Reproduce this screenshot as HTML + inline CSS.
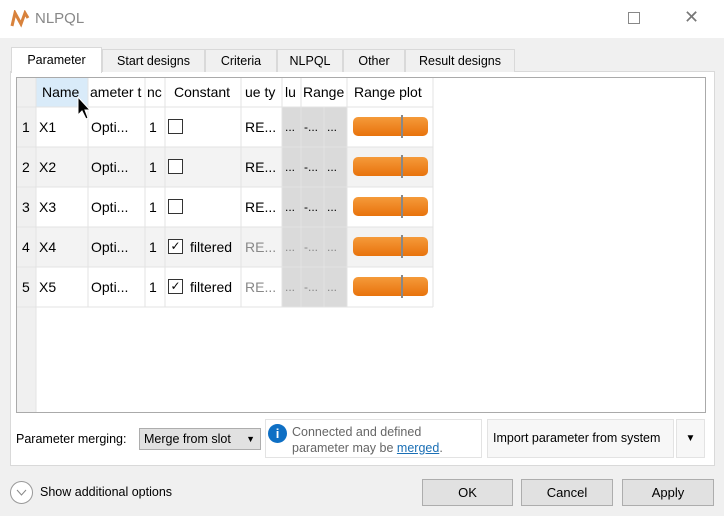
<!DOCTYPE html><html><head><style>
*{margin:0;padding:0;box-sizing:border-box}
body{width:724px;height:516px;background:#f0f0f0;font-family:"Liberation Sans",sans-serif;font-size:13px;color:#000;position:relative;overflow:hidden}
.a{position:absolute}
.tab{position:absolute;top:49px;height:23px;border:1px solid #d9d9d9;border-bottom:none;background:#f0f0f0;text-align:center;line-height:22px;font-size:12.5px}
.c{position:absolute;white-space:nowrap;overflow:hidden;line-height:40px;font-size:14px}
.cb{position:absolute;width:15px;height:15px;border:1px solid #333;background:#fff}
.bar{position:absolute;left:353px;width:75px;height:19px;border-radius:5px;background:linear-gradient(#f59a3a,#e8730c);}
.bar:after{content:"";position:absolute;left:48px;top:-2px;width:2px;height:23px;background:#888}
.btn{position:absolute;top:479px;height:27px;border:1px solid #adadad;background:#e1e1e1;text-align:center;line-height:25px;font-size:13px}
</style></head><body>
<div class="a" style="left:0;top:0;width:724px;height:38px;background:#fff"></div>
<svg class="a" style="left:10px;top:10px" width="20" height="18"><path d="M2 16 L5 3 L11 14 L15 3 L18 8" stroke="#d8823c" stroke-width="3" fill="none"/></svg>
<div class="a" style="left:35px;top:10px;font-size:15px;color:#888">NLPQL</div>
<div class="a" style="left:628px;top:12px;width:12px;height:12px;border:1px solid #888"></div>
<div class="a" style="left:684px;top:7px;font-size:18px;color:#777">✕</div>
<div class="a" style="left:10px;top:71px;width:705px;height:395px;background:#fff;border:1px solid #d9d9d9"></div>
<div class="tab" style="left:11px;top:47px;width:91px;height:26px;background:#fff;line-height:24px">Parameter</div>
<div class="tab" style="left:102px;width:103px">Start designs</div>
<div class="tab" style="left:205px;width:72px">Criteria</div>
<div class="tab" style="left:277px;width:66px">NLPQL</div>
<div class="tab" style="left:343px;width:62px">Other</div>
<div class="tab" style="left:405px;width:110px">Result designs</div>
<div class="a" style="left:16px;top:77px;width:690px;height:336px;border:1px solid #aaa;background:#fff"></div>
<div class="a" style="left:17px;top:78px;width:19px;height:334px;background:#f0f0f0"></div>
<div class="a" style="left:36px;top:78px;width:52px;height:29px;background:#d9ebf9"></div>
<div class="a" style="left:282px;top:107px;width:65px;height:200px;background:#dadada"></div>
<div class="a" style="left:36px;top:147px;width:246px;height:40px;background:#f3f3f3"></div>
<div class="a" style="left:36px;top:227px;width:246px;height:40px;background:#f3f3f3"></div>
<div class="a" style="left:347px;top:147px;width:86px;height:40px;background:#f3f3f3"></div>
<div class="a" style="left:347px;top:227px;width:86px;height:40px;background:#f3f3f3"></div>
<svg class="a" style="left:0;top:0" width="724" height="516">
<g stroke="#e3e3e3" stroke-width="1">
<line x1="36" y1="78" x2="36" y2="412"/>
<line x1="88" y1="78" x2="88" y2="307"/><line x1="145" y1="78" x2="145" y2="307"/><line x1="165" y1="78" x2="165" y2="307"/><line x1="241" y1="78" x2="241" y2="307"/><line x1="282" y1="78" x2="282" y2="307"/><line x1="301" y1="78" x2="301" y2="307"/><line x1="324" y1="107" x2="324" y2="307"/><line x1="347" y1="78" x2="347" y2="307"/><line x1="433" y1="78" x2="433" y2="307"/>
<line x1="17" y1="107" x2="433" y2="107"/><line x1="17" y1="147" x2="433" y2="147"/><line x1="17" y1="187" x2="433" y2="187"/><line x1="17" y1="227" x2="433" y2="227"/><line x1="17" y1="267" x2="433" y2="267"/><line x1="17" y1="307" x2="433" y2="307"/>
</g>
<path d="M78 97 L78 115 L82 111 L86 119 L88 118 L85 110 L90 110 Z" fill="#000" stroke="#fff" stroke-width="1"/>
</svg>
<div class="c" style="left:42px;top:72px">Name</div>
<div class="c" style="left:90px;top:72px;width:54px">ameter t</div>
<div class="c" style="left:147px;top:72px;width:17px">nc</div>
<div class="c" style="left:174px;top:72px">Constant</div>
<div class="c" style="left:245px;top:72px;width:36px">ue ty</div>
<div class="c" style="left:285px;top:72px;width:15px">lu</div>
<div class="c" style="left:303px;top:72px;width:43px">Range</div>
<div class="c" style="left:354px;top:72px">Range plot</div>
<!-- rows -->
<div class="c" style="left:22px;top:107px">1</div><div class="c" style="left:39px;top:107px">X1</div><div class="c" style="left:91px;top:107px">Opti...</div><div class="c" style="left:149px;top:107px">1</div><div class="cb" style="left:168px;top:119px"></div><div class="c" style="left:245px;top:107px">RE...</div><div class="c" style="left:285px;top:107px;font-size:12px">...</div><div class="c" style="left:304px;top:107px;font-size:12px">-...</div><div class="c" style="left:327px;top:107px;font-size:12px">...</div><div class="bar" style="top:117px"></div>
<div class="c" style="left:22px;top:147px">2</div><div class="c" style="left:39px;top:147px">X2</div><div class="c" style="left:91px;top:147px">Opti...</div><div class="c" style="left:149px;top:147px">1</div><div class="cb" style="left:168px;top:159px"></div><div class="c" style="left:245px;top:147px">RE...</div><div class="c" style="left:285px;top:147px;font-size:12px">...</div><div class="c" style="left:304px;top:147px;font-size:12px">-...</div><div class="c" style="left:327px;top:147px;font-size:12px">...</div><div class="bar" style="top:157px"></div>
<div class="c" style="left:22px;top:187px">3</div><div class="c" style="left:39px;top:187px">X3</div><div class="c" style="left:91px;top:187px">Opti...</div><div class="c" style="left:149px;top:187px">1</div><div class="cb" style="left:168px;top:199px"></div><div class="c" style="left:245px;top:187px">RE...</div><div class="c" style="left:285px;top:187px;font-size:12px">...</div><div class="c" style="left:304px;top:187px;font-size:12px">-...</div><div class="c" style="left:327px;top:187px;font-size:12px">...</div><div class="bar" style="top:197px"></div>
<div class="c" style="left:22px;top:227px">4</div><div class="c" style="left:39px;top:227px">X4</div><div class="c" style="left:91px;top:227px">Opti...</div><div class="c" style="left:149px;top:227px">1</div><div class="cb" style="left:168px;top:239px;font-size:12px;line-height:12px;text-align:center">✓</div><div class="c" style="left:190px;top:227px">filtered</div><div class="c" style="left:245px;top:227px;color:#888">RE...</div><div class="c" style="left:285px;top:227px;font-size:12px;color:#888">...</div><div class="c" style="left:304px;top:227px;font-size:12px;color:#888">-...</div><div class="c" style="left:327px;top:227px;font-size:12px;color:#888">...</div><div class="bar" style="top:237px"></div>
<div class="c" style="left:22px;top:267px">5</div><div class="c" style="left:39px;top:267px">X5</div><div class="c" style="left:91px;top:267px">Opti...</div><div class="c" style="left:149px;top:267px">1</div><div class="cb" style="left:168px;top:279px;font-size:12px;line-height:12px;text-align:center">✓</div><div class="c" style="left:190px;top:267px">filtered</div><div class="c" style="left:245px;top:267px;color:#888">RE...</div><div class="c" style="left:285px;top:267px;font-size:12px;color:#888">...</div><div class="c" style="left:304px;top:267px;font-size:12px;color:#888">-...</div><div class="c" style="left:327px;top:267px;font-size:12px;color:#888">...</div><div class="bar" style="top:277px"></div>
<!-- bottom controls -->
<div class="a" style="left:16px;top:432px;font-size:12.5px">Parameter merging:</div>
<div class="a" style="left:139px;top:428px;width:122px;height:22px;border:1px solid #adadad;background:#e1e1e1;font-size:12.5px;line-height:20px;padding-left:4px">Merge from slot<span style="position:absolute;right:5px;font-size:9px">▼</span></div>
<div class="a" style="left:265px;top:419px;width:217px;height:39px;border:1px solid #e3e3e3;background:#fff"></div>
<div class="a" style="left:268px;top:424px;width:19px;height:19px;border-radius:50%;background:#0e6fc4;color:#fff;text-align:center;font-weight:bold;font-size:13px;line-height:19px">i</div>
<div class="a" style="left:292px;top:424px;font-size:12.5px;color:#666;line-height:16px">Connected and defined<br>parameter may be <span style="color:#1a6fb5;text-decoration:underline">merged</span>.</div>
<div class="a" style="left:487px;top:419px;width:187px;height:39px;border:1px solid #e3e3e3;background:#f7f7f7;font-size:12.5px;line-height:37px;padding-left:5px">Import parameter from system</div>
<div class="a" style="left:676px;top:419px;width:29px;height:39px;border:1px solid #e3e3e3;background:#f7f7f7;font-size:10px;line-height:37px;text-align:center">▼</div>
<div class="a" style="left:10px;top:481px;width:23px;height:23px;border:1px solid #999;border-radius:50%;background:#fff"></div>
<svg class="a" style="left:15px;top:488px" width="13" height="9"><path d="M2 2 L6.5 7 L11 2" stroke="#888" fill="none"/></svg>
<div class="a" style="left:40px;top:485px;font-size:12.5px">Show additional options</div>
<div class="btn" style="left:422px;width:91px">OK</div>
<div class="btn" style="left:521px;width:92px">Cancel</div>
<div class="btn" style="left:622px;width:92px">Apply</div>
</body></html>
